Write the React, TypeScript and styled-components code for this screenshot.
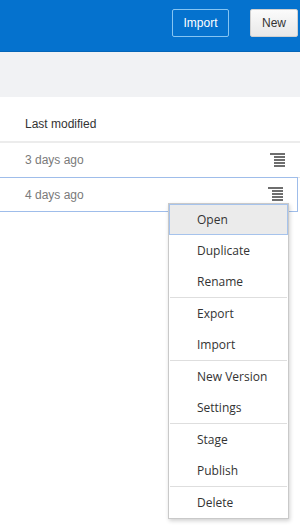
import styled, { createGlobalStyle } from "styled-components";

const GlobalStyle = createGlobalStyle`
  html, body {
    margin: 0;
    padding: 0;
    background: #ffffff;
    font-family: "Liberation Sans", Arial, sans-serif;
  }
`;

const Page = styled.div`
  position: relative;
  width: 300px;
  height: 531px;
  overflow: hidden;
`;

const Header = styled.header`
  height: 52px;
  background: #0572ce;
  border-bottom: 1px solid #0566b8;
  display: flex;
  align-items: flex-start;
  justify-content: flex-end;
  gap: 21px;
  padding: 9px 2px 0 0;
  box-sizing: border-box;
`;

const HeaderButton = styled.button<{ $primary?: boolean }>`
  height: 28px;
  padding: 0;
  width: ${(p) => (p.$primary ? "57px" : "48px")};
  font-family: "Liberation Sans", Arial, sans-serif;
  font-size: 12px;
  border-radius: 2px;
  border: 1px solid ${(p) => (p.$primary ? "#86c5f3" : "#d0d0d0")};
  color: ${(p) => (p.$primary ? "#ffffff" : "#333333")};
  background: ${(p) =>
    p.$primary ? "#0572ce" : "linear-gradient(#fbfbfb, #e8e8e8)"};
`;

const SubBar = styled.div`
  height: 45px;
  background: #f1f2f4;
`;

const TableHead = styled.div`
  height: 46px;
  padding: 20px 0 0 25px;
  font-size: 12px;
  line-height: 14px;
  color: #333333;
  border-bottom: 2px solid #ececec;
  box-sizing: border-box;
`;

const Row = styled.div<{ $focused?: boolean }>`
  height: 35px;
  display: flex;
  align-items: center;
  justify-content: space-between;
  padding: 0 15px 0 25px;
  box-sizing: border-box;
  font-size: 12px;
  color: #7a7a7a;
  width: ${(p) => (p.$focused ? "298px" : "300px")};
  border-bottom: 1px solid ${(p) => (p.$focused ? "#9fbdea" : "#e6e6e6")};
  border-right: ${(p) => (p.$focused ? "1px solid #9fbdea" : "none")};
  ${(p) =>
    p.$focused
      ? "margin-top: -1px; border-top: 1px solid #9fbdea; padding-right: 14px;"
      : ""}
`;

const Menu = styled.div`
  position: absolute;
  left: 168px;
  top: 203px;
  width: 119px;
  background: #ffffff;
  border: 1px solid #c9c9c9;
  box-shadow: 1px 2px 4px rgba(0, 0, 0, 0.18);
  font-family: "Open Sans", "Noto Sans", sans-serif;
  font-size: 12px;
  color: #333333;
`;

const MenuItem = styled.div<{ $active?: boolean }>`
  height: 31px;
  display: flex;
  align-items: center;
  padding-left: 27px;
  box-sizing: border-box;
  background: ${(p) => (p.$active ? "#ebebeb" : "transparent")};
  border: 1px solid ${(p) => (p.$active ? "#a6c3ec" : "transparent")};
`;

const Separator = styled.div`
  height: 1px;
  margin: 0 1px;
  background: #dedede;
`;

const ListIcon = () => (
  <svg width="15" height="15" viewBox="0 0 15 15">
    <rect x="0" y="0" width="15" height="2" fill="#6e6e6e" />
    <rect x="4" y="3" width="11" height="2" fill="#6e6e6e" />
    <rect x="4" y="6" width="11" height="2" fill="#6e6e6e" />
    <rect x="4" y="9" width="11" height="2" fill="#6e6e6e" />
    <rect x="4" y="12" width="11" height="2" fill="#6e6e6e" />
  </svg>
);

const groups = [
  ["Open", "Duplicate", "Rename"],
  ["Export", "Import"],
  ["New Version", "Settings"],
  ["Stage", "Publish"],
  ["Delete"],
];

export default function App() {
  return (
    <Page>
      <GlobalStyle />
      <Header>
        <HeaderButton $primary>Import</HeaderButton>
        <HeaderButton>New</HeaderButton>
      </Header>
      <SubBar />
      <TableHead>Last modified</TableHead>
      <Row>
        <span>3 days ago</span>
        <ListIcon />
      </Row>
      <Row $focused>
        <span>4 days ago</span>
        <ListIcon />
      </Row>
      <Menu>
        {groups.map((g, gi) => (
          <div key={gi}>
            {gi > 0 && <Separator />}
            {g.map((label) => (
              <MenuItem key={label} $active={label === "Open"}>
                {label}
              </MenuItem>
            ))}
          </div>
        ))}
      </Menu>
    </Page>
  );
}
